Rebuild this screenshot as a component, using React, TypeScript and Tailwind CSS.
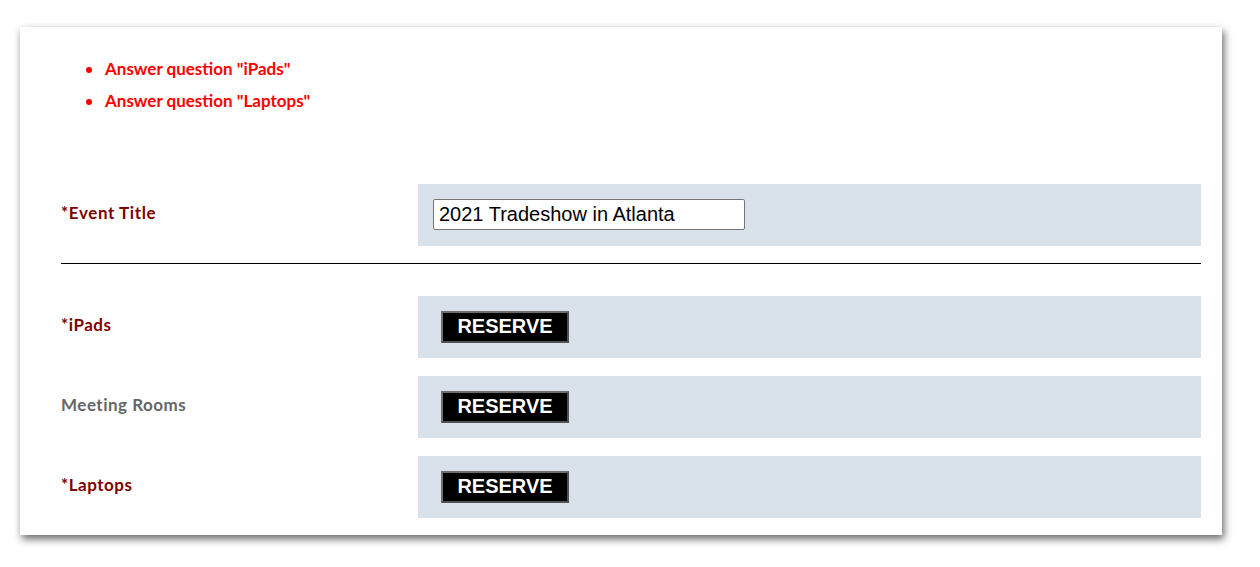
export default function App() {
  const rows = [
    { label: '*iPads', required: true },
    { label: 'Meeting Rooms', required: false },
    { label: '*Laptops', required: true },
  ];

  return (
    <div className="min-h-[567px] w-full bg-white pt-[27px] pl-[20px]">
      <div
        className="w-[1202px] bg-white pl-[41px] pr-[21px] pb-[17px] shadow-[2px_4px_8px_rgba(0,0,0,0.6)]"
        style={{ fontFamily: 'Lato, "DejaVu Sans", sans-serif' }}
      >
        {/* validation errors */}
        <ul className="pt-[26px] pl-[43px] list-disc marker:text-[#ff0000] text-[#ff0000] font-bold text-[17px]">
          <li className="leading-[32px] pl-[1px]">Answer question "iPads"</li>
          <li className="leading-[32px] pl-[1px]">Answer question "Laptops"</li>
        </ul>

        <div className="mt-[67px] flex items-start">
          <div className="w-[357px] pt-[19px] leading-[20px] text-[17px] tracking-[0.6px] font-bold text-[#800000]">
            *Event Title
          </div>
          <div className="flex-1 h-[62px] bg-[#d9e2eb] p-[15px]">
            <input
              type="text"
              defaultValue="2021 Tradeshow in Atlanta"
              className="w-[312px] h-[31px] border border-[#767676] rounded-[2px] bg-white px-[5px] text-[20px] text-black outline-none"
              style={{ fontFamily: '"Liberation Sans", Arial, sans-serif' }}
            />
          </div>
        </div>

        <div className="mt-[17px] mb-[32px] h-px bg-black" />

        <div className="flex flex-col gap-[18px]">
          {rows.map((r) => (
            <div key={r.label} className="flex items-start">
              <div
                className={`w-[357px] pt-[19px] leading-[20px] text-[17px] tracking-[0.5px] font-bold ${
                  r.required ? 'text-[#800000]' : 'text-[#666666]'
                }`}
              >
                {r.label}
              </div>
              <div className="flex-1 h-[62px] bg-[#d9e2eb] pt-[15px] pl-[23px]">
                <button
                  className="w-[128px] h-[32px] pb-[2px] bg-black border-2 border-t-[#6e6e6e] border-l-[#6e6e6e] border-r-[#505050] border-b-[#505050] text-white font-bold text-[20px] leading-none"
                  style={{ fontFamily: '"Liberation Sans", Arial, sans-serif' }}
                >
                  RESERVE
                </button>
              </div>
            </div>
          ))}
        </div>
      </div>
    </div>
  );
}
